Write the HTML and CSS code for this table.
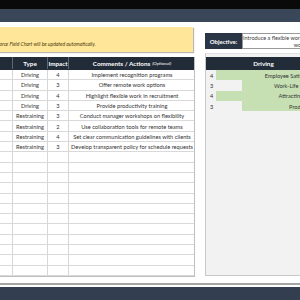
FILE: index.html
```html
<!DOCTYPE html>
<html>
<head>
<meta charset="utf-8">
<link rel="stylesheet" href="styles.css">
</head>
<body>
<div class="topbar"></div>
<div class="titlebar"></div>
<div class="main">
  <div class="left">
    <div class="banner"><p class="banner-text">Fill in the forces below and the Force Field Chart will be updated automatically.</p></div>
    <div class="sheet">
      <div class="row head">
        <div class="c c-force"></div>
        <div class="c">Type</div>
        <div class="c">Impact</div>
        <div class="c">Comments / Actions <i class="opt">(Optional)</i></div>
      </div>
      <div class="row"><div class="c c-force"></div><div class="c">Driving</div><div class="c">4</div><div class="c">Implement recognition programs</div></div>
      <div class="row"><div class="c c-force"></div><div class="c">Driving</div><div class="c">3</div><div class="c">Offer remote work options</div></div>
      <div class="row"><div class="c c-force"></div><div class="c">Driving</div><div class="c">4</div><div class="c">Highlight flexible work in recruitment</div></div>
      <div class="row"><div class="c c-force"></div><div class="c">Driving</div><div class="c">3</div><div class="c">Provide productivity training</div></div>
      <div class="row"><div class="c c-force"></div><div class="c">Restraining</div><div class="c">3</div><div class="c">Conduct manager workshops on flexibility</div></div>
      <div class="row"><div class="c c-force"></div><div class="c">Restraining</div><div class="c">2</div><div class="c">Use collaboration tools for remote teams</div></div>
      <div class="row"><div class="c c-force"></div><div class="c">Restraining</div><div class="c">4</div><div class="c">Set clear communication guidelines with clients</div></div>
      <div class="row"><div class="c c-force"></div><div class="c">Restraining</div><div class="c">3</div><div class="c">Develop transparent policy for schedule requests</div></div>
      <div class="row"><div class="c c-force"></div><div class="c"></div><div class="c"></div><div class="c"></div></div>
      <div class="row"><div class="c c-force"></div><div class="c"></div><div class="c"></div><div class="c"></div></div>
      <div class="row"><div class="c c-force"></div><div class="c"></div><div class="c"></div><div class="c"></div></div>
      <div class="row"><div class="c c-force"></div><div class="c"></div><div class="c"></div><div class="c"></div></div>
      <div class="row"><div class="c c-force"></div><div class="c"></div><div class="c"></div><div class="c"></div></div>
      <div class="row"><div class="c c-force"></div><div class="c"></div><div class="c"></div><div class="c"></div></div>
      <div class="row"><div class="c c-force"></div><div class="c"></div><div class="c"></div><div class="c"></div></div>
      <div class="row"><div class="c c-force"></div><div class="c"></div><div class="c"></div><div class="c"></div></div>
      <div class="row"><div class="c c-force"></div><div class="c"></div><div class="c"></div><div class="c"></div></div>
      <div class="row"><div class="c c-force"></div><div class="c"></div><div class="c"></div><div class="c"></div></div>
      <div class="row"><div class="c c-force"></div><div class="c"></div><div class="c"></div><div class="c"></div></div>
      <div class="row"><div class="c c-force"></div><div class="c"></div><div class="c"></div><div class="c"></div></div>
    </div>
  </div>
  <div class="right">
    <div class="objective">
      <div class="obj-label">Objective:</div>
      <div class="obj-text">Introduce a flexible work schedule policy to improve employee<br>work-life balance.</div>
    </div>
    <div class="panel">
      <div class="ff-head">Driving</div>
      <div class="ff-row"><span class="ff-num">4</span><div class="ff-area"><div class="ff-bar" style="width:100%"></div><span class="ff-label">Employee Satisfaction</span></div></div>
      <div class="ff-row"><span class="ff-num">3</span><div class="ff-area"><div class="ff-bar" style="width:75%"></div><span class="ff-label">Work-Life Balance</span></div></div>
      <div class="ff-row"><span class="ff-num">4</span><div class="ff-area"><div class="ff-bar" style="width:100%"></div><span class="ff-label">Attracting Talent</span></div></div>
      <div class="ff-row"><span class="ff-num">3</span><div class="ff-area"><div class="ff-bar" style="width:75%"></div><span class="ff-label">Productivity</span></div></div>
    </div>
  </div>
</div>
<div class="footer-line"></div>
<div class="footer"></div>
</body>
</html>
```
FILE: styles.css
```css
html, body {
  margin: 0;
  padding: 0;
}
body {
  width: 300px;
  height: 300px;
  overflow: hidden;
  background: #ffffff;
  font-family: Lato, "Open Sans", sans-serif;
  color: #262626;
}
.topbar {
  height: 9px;
  background: #0a0a0a;
}
.titlebar {
  height: 13px;
  background: #3a4759;
}
.main {
  display: flex;
  padding-top: 5px;
  height: 249px;
}
.left {
  flex: none;
  width: 262px;
  margin-left: -67px;
}
.banner {
  height: 25px;
  background: #ffe699;
  box-shadow: 1px 1px 1px #b8b8b8;
  margin-right: 2px;
  box-sizing: border-box;
  padding: 14px 0 0 0;
}
.banner-text {
  margin: 0;
  font-size: 5px;
  font-style: italic;
  color: #4d3d10;
  white-space: nowrap;
}
.sheet {
  margin-top: 5px;
  border-right: 1px solid #bfbfbf;
  border-bottom: 1px solid #bfbfbf;
}
.row {
  display: grid;
  grid-template-columns: 80px 35px 21px 126px;
  height: 10.3px;
  box-sizing: border-box;
  border-bottom: 1px solid #d9d9d9;
  font-size: 5.7px;
  color: #333333;
}
.row .c {
  display: flex;
  align-items: center;
  justify-content: center;
  border-right: 1px solid #d6d6d6;
  white-space: nowrap;
  overflow: hidden;
}
.row .c:last-child {
  border-right: none;
}
.row.head {
  height: 13px;
  background: #222b38;
  color: #ffffff;
  font-weight: bold;
  font-size: 6.3px;
  border-bottom: 1px solid #222b38;
}
.row.head .c {
  border-right: 1px solid #5b6678;
}
.row.head .c:last-child {
  border-right: none;
}
.opt {
  font-weight: normal;
  font-size: 4.6px;
  margin-left: 2px;
}
.right {
  flex: none;
  width: 200px;
  margin-left: 10px;
}
.objective {
  display: flex;
  height: 16px;
  margin-top: 6px;
}
.obj-label {
  width: 37px;
  flex: none;
  background: #2a3646;
  color: #ffffff;
  font-weight: bold;
  font-size: 6px;
  display: flex;
  align-items: center;
  justify-content: center;
}
.obj-text {
  width: 146px;
  flex: none;
  box-sizing: border-box;
  border: 1px solid #9a9a9a;
  font-size: 5.5px;
  line-height: 7px;
  text-align: center;
  padding-top: 1px;
  color: #404040;
  white-space: nowrap;
}
.panel {
  margin-top: 4px;
  height: 223px;
  box-sizing: border-box;
  background: #f2f2f2;
  border-left: 1px solid #c9c9c9;
  border-top: 1px solid #e0e0e0;
  border-bottom: 1px solid #c9c9c9;
  padding-top: 3px;
}
.ff-head {
  width: 115px;
  height: 13px;
  background: #222b38;
  color: #ffffff;
  font-weight: bold;
  font-size: 6.3px;
  display: flex;
  align-items: center;
  justify-content: center;
}
.ff-row {
  display: flex;
  width: 115px;
  height: 10.3px;
  font-size: 5.6px;
  color: #333333;
}
.ff-num {
  width: 10px;
  flex: none;
  padding-left: 4px;
  box-sizing: border-box;
  display: flex;
  align-items: center;
}
.ff-area {
  position: relative;
  flex: 1;
  display: flex;
  justify-content: flex-end;
}
.ff-bar {
  background: #c6e0b4;
  height: 100%;
}
.ff-label {
  position: absolute;
  right: 2px;
  top: 0;
  bottom: 0;
  display: flex;
  align-items: center;
  white-space: nowrap;
}
.footer-line {
  height: 2px;
  margin-top: 7px;
  background: #a6a6a6;
}
.footer {
  height: 13px;
  margin-top: 2px;
  background: #333f50;
}
```
